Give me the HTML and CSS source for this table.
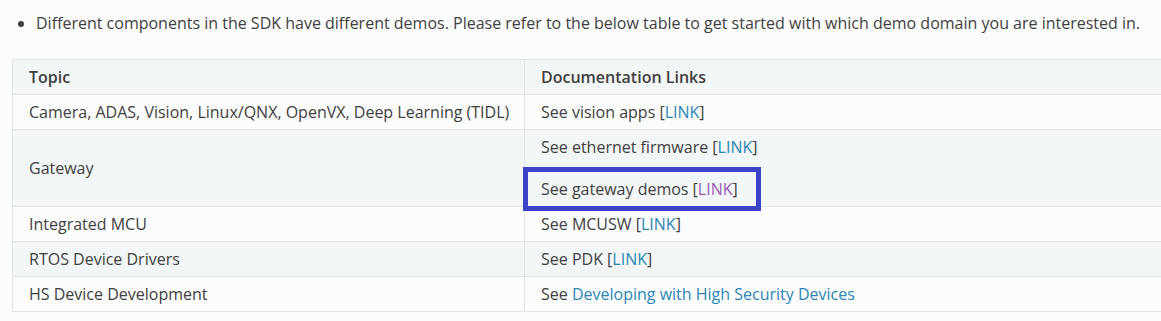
FILE: index.html
```html
<!DOCTYPE html>
<html>
<head>
<meta charset="utf-8">
<link rel="stylesheet" href="styles.css">
</head>
<body>
<div class="content">
  <ul class="bullets">
    <li>Different components in the SDK have different demos. Please refer to the below table to get started with which demo domain you are interested in.</li>
  </ul>
  <table class="docs">
    <thead>
      <tr><th class="col-topic">Topic</th><th>Documentation Links</th></tr>
    </thead>
    <tbody>
      <tr><td>Camera, ADAS, Vision, Linux/QNX, OpenVX, Deep Learning (TIDL)</td><td><p>See vision apps [<a href="#">LINK</a>]</p></td></tr>
      <tr class="odd"><td>Gateway</td><td><p>See ethernet firmware [<a href="#">LINK</a>]</p><p class="highlighted">See gateway demos [<a class="visited" href="#">LINK</a>]<span class="mark"></span></p></td></tr>
      <tr><td>Integrated MCU</td><td><p>See MCUSW [<a href="#">LINK</a>]</p></td></tr>
      <tr class="odd"><td>RTOS Device Drivers</td><td><p>See PDK [<a href="#">LINK</a>]</p></td></tr>
      <tr><td>HS Device Development</td><td><p>See <a href="#">Developing with High Security Devices</a></p></td></tr>
    </tbody>
  </table>
</div>
</body>
</html>
```

FILE: styles.css
```css
html, body {
  margin: 0;
  padding: 0;
  background: #fcfcfc;
  overflow: hidden;
}
body {
  font-family: "Open Sans", "Noto Sans", sans-serif;
  font-stretch: 90%;
  font-size: 16px;
  color: #404040;
}
.content {
  padding: 11px 0 0 12px;
  width: 1200px;
}
.bullets {
  margin: 0 0 24px 24px;
  padding: 0;
  line-height: 24px;
  list-style: disc;
}
.docs {
  border-collapse: collapse;
  border-spacing: 0;
  width: 1180px;
  table-layout: fixed;
  border: 1px solid #e1e4e5;
}
.docs th, .docs td {
  border: 1px solid #e1e4e5;
  padding: 8px 16px;
  line-height: 18px;
  text-align: left;
  vertical-align: middle;
  font-size: 16px;
  white-space: nowrap;
}
.docs th {
  font-weight: 600;
  background: #f3f6f6;
}
.col-topic {
  width: 479px;
}
.docs td p {
  margin: 0 0 24px 0;
}
.docs td p:last-child {
  margin-bottom: 0;
}
.docs tr.odd td {
  background: #f3f6f6;
}
a {
  color: #2a86b4;
  text-decoration: none;
}
a.visited {
  color: #9b59b6;
}
.highlighted {
  position: relative;
}
.mark {
  position: absolute;
  box-sizing: border-box;
  left: -18px;
  top: -13px;
  width: 238px;
  height: 44px;
  border: 5px solid #3d43c9;
}
```
